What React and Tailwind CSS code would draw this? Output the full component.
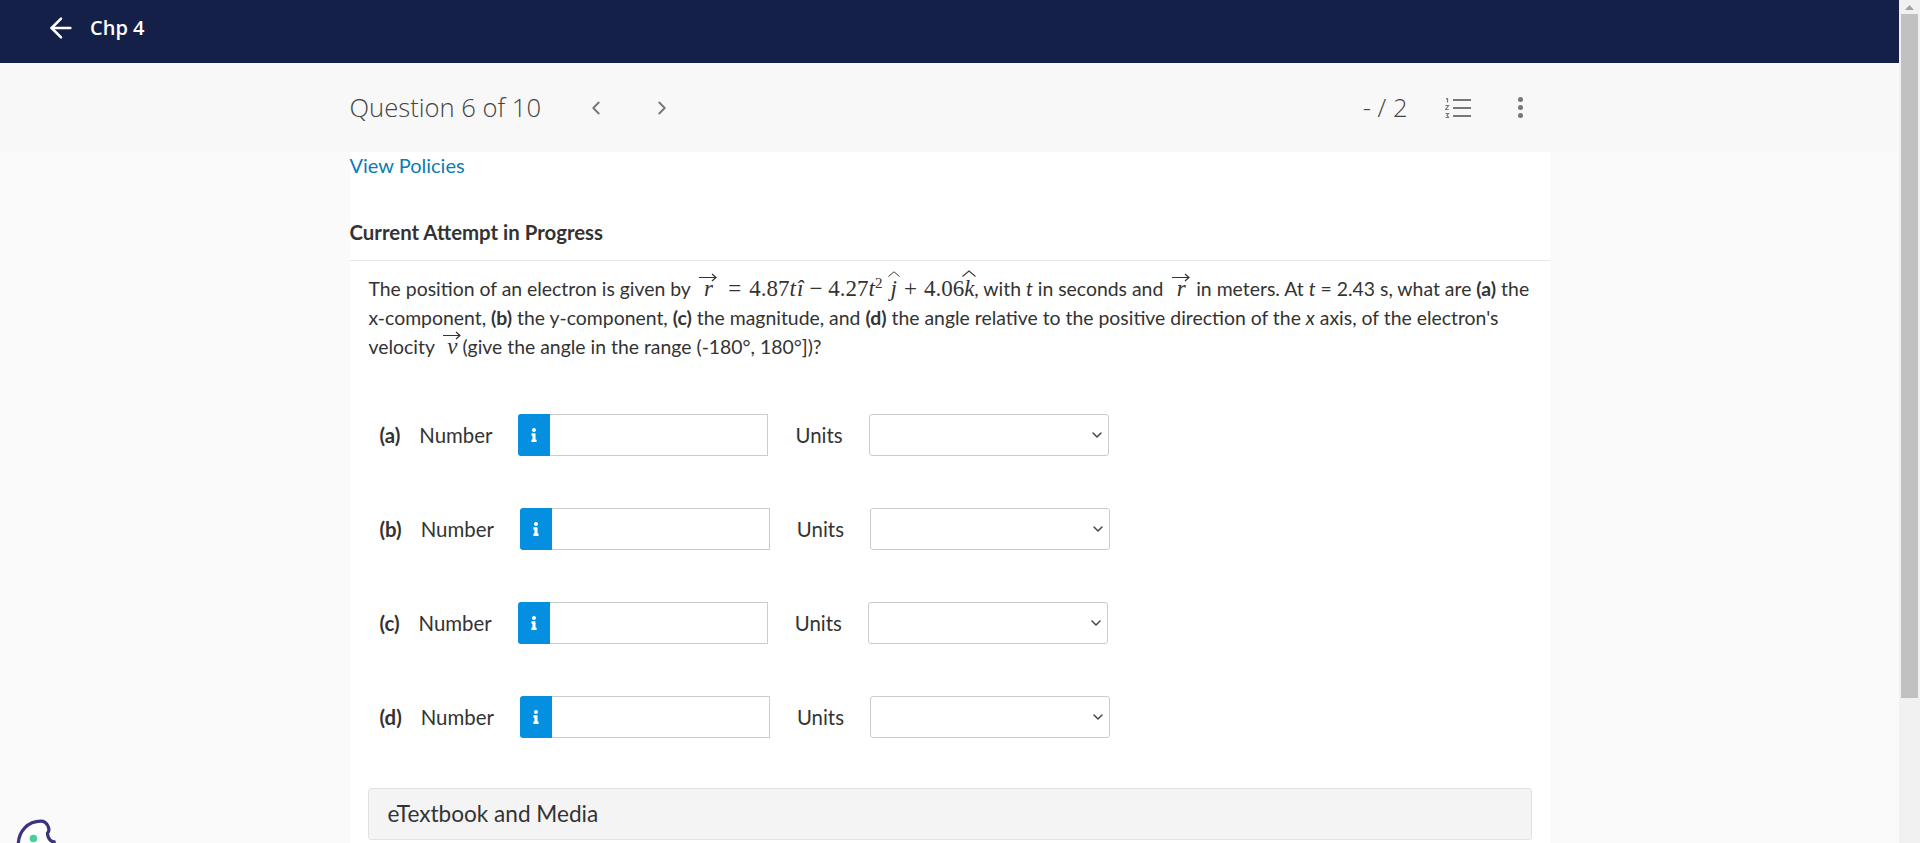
import React from 'react';
import { ArrowLeft, ChevronDown, ChevronLeft, ChevronRight } from 'lucide-react';
import { FaInfo } from 'react-icons/fa';

const Vec = ({ children }) => (
    <span className="relative inline-block w-[18px] ml-[4px] mr-[1px] text-center font-['Liberation_Serif',serif] text-[23px] leading-none">
        <i>{children}</i>
        <svg className="absolute left-0 top-[-4px] w-[18px] h-[9px]" viewBox="0 0 18 9" fill="none" stroke="#333" strokeWidth="1.2">
            <path d="M0 4.5H17M13 1L17 4.5L13 8" />
        </svg>
    </span>
);

const Hat = ({ children, className }) => (
    <span className="relative inline-block">
        <i>{children}</i>
        <svg className={`absolute ${className}`} viewBox="0 0 14 6" preserveAspectRatio="none" fill="none" stroke="#333" strokeWidth="1">
            <path d="M0.5 5.5L7 0.8L13.5 5.5" />
        </svg>
    </span>
);

const NumberedList = () => (
    <svg width="26" height="20" viewBox="0 0 26 20" fill="none" stroke="#777">
        <path d="M8 2H26M8 10H26M8 18H26" strokeWidth="2.2" />
        <path d="M1 1L2.5 0.5V4.5" strokeWidth="1.2" />
        <path d="M0.5 7.5H3.5L0.5 11.5H3.8" strokeWidth="1.2" />
        <path d="M0.5 15.5H3.5L2 17.2L3.5 19.5H0.5" strokeWidth="1.2" />
    </svg>
);

const AnswerRow = ({ part }) => (
    <div className="flex items-center h-[42px] text-[20.4px] text-[#333]">
        <span className="font-bold mr-[19px] pb-[1px]">({part})</span>
        <span className="mr-[26px] pb-[1px]">Number</span>
        <div className="flex h-[42px] w-[250px] mr-[27px]">
            <div className="w-[32px] bg-[#048fe1] rounded-l-[3px] flex items-center justify-center text-white">
                <FaInfo size={14} />
            </div>
            <input type="text" className="flex-1 min-w-0 border border-[#ccc] border-l-0 bg-white" />
        </div>
        <span className="mr-[26px] pb-[1px]">Units</span>
        <div className="relative w-[240px] h-[42px]">
            <select className="appearance-none w-full h-full border border-[#ccc] rounded-[3px] bg-white" />
            <ChevronDown size={16} strokeWidth={2.2} className="absolute right-[4px] top-[13px] text-[#444]" />
        </div>
    </div>
);

export default function App() {
    return (
        <div className="h-[843px] overflow-hidden flex bg-[#fafafa] font-['Lato',sans-serif] relative">
            <div className="flex-1 min-w-0 flex flex-col">
                {/* Top bar */}
                <header className="h-[63px] shrink-0 bg-[#142048] flex items-center pl-[45px] pb-[7px] text-white">
                    <ArrowLeft size={32} strokeWidth={1.9} />
                    <span className="ml-[13px] text-[20px] font-semibold font-['Open_Sans',sans-serif]">Chp 4</span>
                </header>

                {/* Question bar */}
                <div className="h-[89px] shrink-0 bg-[#f8f8f8]">
                    <div className="w-[1200px] mx-auto h-full flex items-center font-['Open_Sans',sans-serif] text-[#444]">
                        <span className="text-[25.6px] font-light pt-[2px]">Question 6 of 10</span>
                        <ChevronLeft size={22} strokeWidth={2} className="ml-[44px] text-[#757575]" />
                        <ChevronRight size={22} strokeWidth={2} className="ml-[44px] text-[#757575]" />
                        <span className="ml-auto text-[25.6px] font-light pt-[2px]">- / 2</span>
                        <span className="ml-[37px]"><NumberedList /></span>
                        <span className="ml-[47px] mr-[27px] flex flex-col gap-[3px]">
                            <span className="w-[5px] h-[5px] rounded-full bg-[#777]" />
                            <span className="w-[5px] h-[5px] rounded-full bg-[#777]" />
                            <span className="w-[5px] h-[5px] rounded-full bg-[#777]" />
                        </span>
                    </div>
                </div>

                {/* Question card */}
                <main className="w-[1200px] mx-auto flex-1 bg-white text-[#333]">
                    <a className="block text-[20px] leading-[26px] text-[#0b7cb3]">View Policies</a>
                    <h2 className="mt-[42px] h-[40px] text-[20.4px] leading-[24px] font-bold">Current Attempt in Progress</h2>
                    <div className="h-px bg-[#e8e8e8]" />

                    <div className="px-[18px] pt-[14px]">
                        <p className="pl-px text-[19.4px] leading-[28.8px] whitespace-nowrap">
                            The position of an electron is given by <Vec>r</Vec>
                            <span className="font-['Liberation_Serif',serif] text-[23px] leading-none">
                                <span className="ml-[10px] mr-[8px]">=</span>4.87<i>t</i><i className="ml-[1px]">î</i>
                                <span className="mx-[6px]">−</span>4.27<i>t</i>
                                <span className="relative top-[-8px] text-[15px] mr-[8px]">2</span>
                                <Hat className="left-[-3px] top-[-6px] w-[12px] h-[6px]">j</Hat>
                                <span className="mx-[7px]">+</span>4.06<Hat className="left-[-2px] top-[-7px] w-[14px] h-[7px]">k</Hat>
                            </span>
                            , with <i>t</i> in seconds and <Vec>r</Vec> in meters. At <i>t</i> = 2.43 s, what are <b>(a)</b> the
                            <br />
                            x-component, <b>(b)</b> the y-component, <b>(c)</b> the magnitude, and <b>(d)</b> the angle relative to the positive direction of the <i>x</i> axis, of the electron's
                            <br />
                            velocity <Vec>v</Vec>(give the angle in the range (-180°, 180°])?
                        </p>

                        <div className="mt-[53px] pl-[12px] flex flex-col gap-[52px]">
                            <AnswerRow part="a" />
                            <AnswerRow part="b" />
                            <AnswerRow part="c" />
                            <AnswerRow part="d" />
                        </div>

                        <div className="mt-[50px] h-[52px] flex items-center px-[19px] bg-[#f4f4f4] border border-[#e2e2e2] rounded-[3px] text-[22.6px]">
                            eTextbook and Media
                        </div>
                    </div>
                </main>
            </div>

            {/* Scrollbar */}
            <div className="w-[21px] shrink-0 bg-[#f1f1f1] flex flex-col items-center">
                <div className="h-[14px] flex items-center justify-center">
                    <svg width="9" height="5" viewBox="0 0 9 5"><path d="M4.5 0L9 5H0Z" fill="#a3a3a3" /></svg>
                </div>
                <div className="w-[17px] h-[684px] bg-[#c1c1c1]" />
            </div>

            {/* Cookie badge */}
            <svg className="absolute left-[15px] top-[819px] w-[52px] h-[52px]" viewBox="0 0 48 48" fill="#fff" stroke="#3b3480" strokeWidth="3">
                <path d="M24 2C12 2 3 11 3 24C3 37 12 46 24 46C36 46 45 37 45 26C40 27 37 26 36 21C34 21 30 19 30 13C33 10 30 2 24 2Z" />
                <circle cx="17" cy="18" r="3.5" fill="#45d19a" stroke="none" />
            </svg>
        </div>
    );
}
